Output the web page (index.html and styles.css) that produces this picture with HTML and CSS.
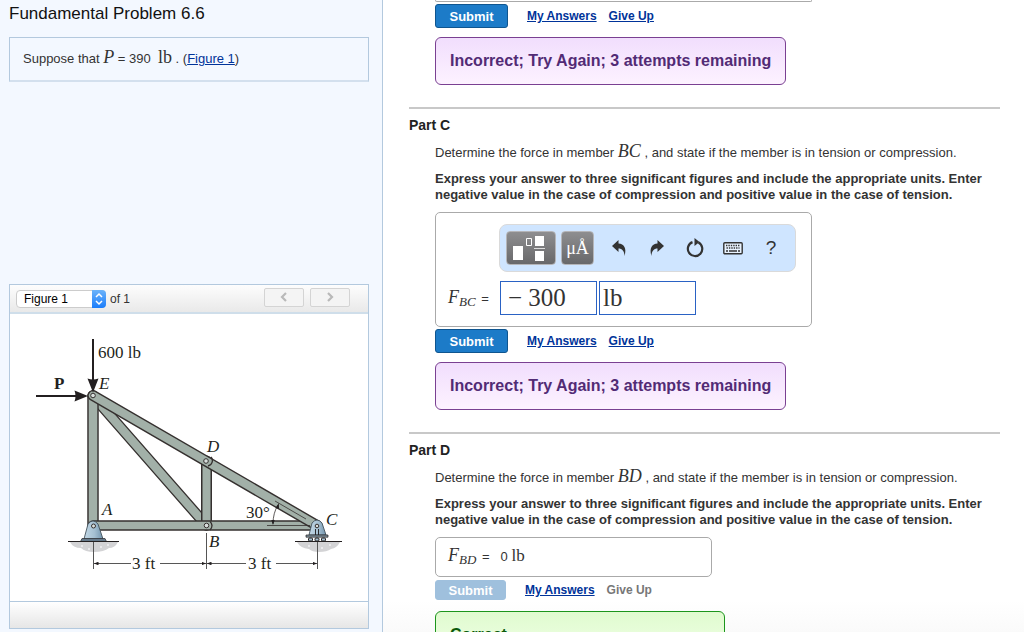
FILE: index.html
```html
<!DOCTYPE html>
<html lang="en">
<head>
<meta charset="utf-8">
<title>Fundamental Problem 6.6</title>
<link rel="stylesheet" href="styles.css">
</head>
<body>
<div class="layout">
  <aside class="sidebar">
    <h1 class="title">Fundamental Problem 6.6</h1>
    <div class="statement">Suppose that <i class="math">P</i> = 390 &nbsp;<span class="unit">lb</span> . (<a href="#figure">Figure 1</a>)</div>
    <section class="figure" id="figure">
      <div class="figure-bar">
        <label class="picker">
          <select class="picker-select" aria-label="Figure"><option>Figure 1</option></select>
          <svg class="picker-icon" width="14" height="18" viewBox="0 0 14 18" aria-hidden="true"><path d="M4 7l3-3 3 3M4 11l3 3 3-3" fill="none" stroke="#fff" stroke-width="1.5"/></svg>
        </label>
        <span class="figure-count">of 1</span>
        <div class="pager">
          <button class="pager-button" type="button" aria-label="Previous figure"><svg width="8" height="10" viewBox="0 0 8 10"><path d="M6 1L2 5l4 4" fill="none" stroke="#b9b9b9" stroke-width="2.2"/></svg></button>
          <button class="pager-button" type="button" aria-label="Next figure"><svg width="8" height="10" viewBox="0 0 8 10"><path d="M2 1l4 4-4 4" fill="none" stroke="#b9b9b9" stroke-width="2.2"/></svg></button>
        </div>
      </div>
      <svg class="truss" viewBox="10 314 358 287" role="img" aria-label="Truss loaded at joint E">
        <defs>
          <linearGradient id="steel" x1="0" x2="1"><stop offset="0" stop-color="#c3d8e6"/><stop offset=".55" stop-color="#a5c0d2"/><stop offset="1" stop-color="#7294ad"/></linearGradient>
          <marker id="dim" viewBox="0 0 5 4" refX="5" refY="2" markerWidth="5" markerHeight="4" orient="auto-start-reverse"><path d="M0 0L5 2 0 4z" fill="#231f20"/></marker>
        </defs>
        <g fill="#d3d3d5">
          <path d="M70 542h48q-3 6-9 6-5 4-15 4-9 0-13-4-8 0-11-6z"/>
          <path d="M297 542h43q-3 6-9 7-4 3-12 3-7 0-10-3-9-1-12-7z"/>
        </g>
        <g fill="#f1f1f2"><circle cx="82" cy="546" r="1"/><circle cx="89" cy="549" r="1"/><circle cx="101" cy="547" r="1"/><circle cx="108" cy="545" r="1"/><circle cx="309" cy="546" r="1"/><circle cx="322" cy="548" r="1"/><circle cx="330" cy="545" r="1"/></g>
        <g fill="none" stroke-linecap="round">
          <path d="M93 396L206 525" stroke="#35302f" stroke-width="11"/><path d="M93 396L206 525" stroke="#a2b0a8" stroke-width="8.4"/>
          <path d="M206.500 461V525" stroke="#35302f" stroke-width="11"/><path d="M206.500 461V525" stroke="#a2b0a8" stroke-width="8"/>
          <path d="M93 396V526" stroke="#35302f" stroke-width="11.500"/><path d="M93 396V526" stroke="#a2b0a8" stroke-width="8.600"/>
          <path d="M93 525.500H317" stroke="#35302f" stroke-width="10.600"/><path d="M93 525.500H317" stroke="#a2b0a8" stroke-width="7.600"/>
          <path d="M93 395.500L317 525.500" stroke="#35302f" stroke-width="11"/><path d="M93 395.500L317 525.500" stroke="#a2b0a8" stroke-width="8.200"/>
        </g>
        <g fill="none" stroke="#35302f">
          <path d="M211 457a5.500 5.500 0 0 1-3 9M210 521.500q4 4 0 8.500" stroke-width="1.3"/>
          <path d="M275 501l31 18M267 525.500h43" stroke-width=".8"/>
          <path d="M278 505Q273 513 273 524" stroke-width=".8"/>
        </g>
        <path d="M275.500 508l3.300-5 .2 5.800zM271.300 520h3.400l-1.700 5z" fill="#231f20"/>
        <path d="M84 539l4-15q5-6 10 0l5 15z" fill="url(#steel)" stroke="#44525c" stroke-width=".9"/>
        <path d="M82 538.500h23l1.500 3h-26z" fill="#65798a" stroke="#2b2b2e" stroke-width=".7"/>
        <path d="M309 535l3-12q5-6 10 0l4 12z" fill="url(#steel)" stroke="#44525c" stroke-width=".9"/>
        <path d="M315.500 529v6M318.500 529v6" stroke="#2b2b2e"/>
        <path d="M306 535h22v2.200h-22z" fill="#7d909c" stroke="#231f20" stroke-width=".7"/>
        <g fill="#a9c3d2" stroke="#231f20" stroke-width="1"><rect x="308.500" y="538" width="4" height="3" rx="1"/><rect x="315" y="538" width="4" height="3" rx="1"/><rect x="321.500" y="538" width="4" height="3" rx="1"/></g>
        <path d="M68 541.500h51M295 541.500h47" stroke="#231f20" stroke-width="1"/>
        <g fill="#d9dfdd" stroke="#35302f" stroke-width="1"><circle cx="93" cy="395.500" r="2.300"/><circle cx="206" cy="461" r="2.300"/><circle cx="206.500" cy="525.500" r="2.300"/><circle cx="93.500" cy="526" r="2"/><circle cx="317" cy="526" r="1.800"/></g>
        <path d="M93 339v42M36 396h42" stroke="#231f20" stroke-width="2"/>
        <path d="M87.500 378.500q5.500 2 11 0L93 392.500zM74.500 390.500q2 5.500 0 11L88 396z" fill="#231f20"/>
        <path d="M93.500 542v27M206.500 533v36M317.500 542v27" stroke="#555" stroke-width="1"/>
        <g stroke="#444" stroke-width=".9"><path d="M131 563.500H94" marker-end="url(#dim)"/><path d="M160 563.500H206" marker-end="url(#dim)"/><path d="M246 563.500H207" marker-end="url(#dim)"/><path d="M276 563.500H317" marker-end="url(#dim)"/></g>
        <g class="truss-text">
          <text x="98" y="358">600 lb</text>
          <text x="54" y="389" font-weight="bold">P</text>
          <text x="132" y="569">3 ft</text>
          <text x="248" y="569">3 ft</text>
          <text x="246" y="518">30°</text>
          <g font-style="italic"><text x="99" y="389">E</text><text x="207" y="452">D</text><text x="102" y="515">A</text><text x="209" y="547">B</text><text x="326" y="525">C</text></g>
        </g>
      </svg>
      <div class="figure-foot"></div>
    </section>
  </aside>

  <main class="content">
    <section class="part part-scrolled">
      <div class="part-body">
        <div class="answer answer-wide answer-end"></div>
        <div class="actions"><button class="submit" type="button">Submit</button><a href="#answers">My Answers</a><a href="#giveup">Give Up</a></div>
        <div class="feedback">Incorrect; Try Again; 3 attempts remaining</div>
      </div>
    </section>

    <section class="part">
      <h2 class="part-title">Part C</h2>
      <div class="part-body">
        <p class="question">Determine the force in member <i class="math">BC</i> , and state if the member is in tension or compression.</p>
        <p class="instructions">Express your answer to three significant figures and include the appropriate units. Enter negative value in the case of compression and positive value in the case of tension.</p>
        <div class="answer answer-wide answer-editor">
          <div class="tools">
            <button class="tool-key" type="button" aria-label="Templates"><svg width="36" height="26" viewBox="0 0 36 26"><path d="M0 11h10v14H0zM22 1h9v10h-9zM22 16h9v10h-9z" fill="#fff"/><path d="M13.500 3.500h5v7h-5z" fill="none" stroke="#fff"/><path d="M21 13.500h11" stroke="#ddd"/></svg></button>
            <button class="tool-key tool-symbols" type="button">μÅ</button>
            <button class="tool" type="button" aria-label="Undo"><svg width="16" height="16" viewBox="0 0 16 16"><path d="M1 6l6.500-6v3.500C13 4 16 8 13.500 16 13.500 11 11 8.500 7.500 8.500V12z" fill="#333"/></svg></button>
            <button class="tool" type="button" aria-label="Redo"><svg width="16" height="16" viewBox="0 0 16 16"><path d="M15 6L8.500 0v3.500C3 4 0 8 2.500 16 2.500 11 5 8.500 8.500 8.500V12z" fill="#333"/></svg></button>
            <button class="tool" type="button" aria-label="Reset"><svg width="18" height="20" viewBox="0 0 18 20"><path d="M12.500 4.500a7.200 7.200 0 1 1-6-.4" fill="none" stroke="#333" stroke-width="2.200"/><path d="M8.500 0l5 4-5 4z" fill="#333"/></svg></button>
            <button class="tool" type="button" aria-label="Keyboard"><svg width="20" height="14" viewBox="0 0 20 14"><rect x=".8" y="1.800" width="18.400" height="11" rx="1" fill="#e9f3ff" stroke="#333" stroke-width="1.400"/><path d="M3 4.500h14M3.500 7h13" stroke="#333" stroke-width="1.400" stroke-dasharray="1.400 1"/><path d="M3 10h2M6 10h8M15 10h2" stroke="#333" stroke-width="1.500"/></svg></button>
            <button class="tool tool-help" type="button" aria-label="Help">?</button>
          </div>
          <div class="entry">
            <label class="variable" for="value"><i>F<sub>BC</sub></i> =</label>
            <input class="field field-value" id="value" type="text" value="− 300">
            <input class="field" type="text" value="lb" aria-label="Units">
          </div>
        </div>
        <div class="actions"><button class="submit" type="button">Submit</button><a href="#answers">My Answers</a><a href="#giveup">Give Up</a></div>
        <div class="feedback">Incorrect; Try Again; 3 attempts remaining</div>
      </div>
    </section>

    <section class="part">
      <h2 class="part-title">Part D</h2>
      <div class="part-body">
        <p class="question">Determine the force in member <i class="math">BD</i> , and state if the member is in tension or compression.</p>
        <p class="instructions">Express your answer to three significant figures and include the appropriate units. Enter negative value in the case of compression and positive value in the case of tension.</p>
        <div class="answer answer-result"><span class="variable"><i>F<sub>BD</sub></i> =</span><span>0 <span class="result-unit">lb</span></span></div>
        <div class="actions actions-done"><button class="submit" type="button" disabled>Submit</button><a href="#answers">My Answers</a><span class="muted">Give Up</span></div>
        <div class="feedback feedback-correct">Correct</div>
      </div>
    </section>
  </main>
</div>
</body>
</html>
```
FILE: styles.css
```css
* { box-sizing: border-box; }

body {
  margin: 0;
  font: 13px/16px "Liberation Sans", Arial, sans-serif;
  color: #333;
  background: #fff;
}

h1, h2, p { margin: 0; }
a { color: #039; }
button { font-family: inherit; padding: 0; }

.layout {
  display: flex;
  height: 100vh;
  overflow: hidden;
}

/* Problem statement and figure */
.sidebar {
  flex: 0 0 383px;
  display: flex;
  flex-direction: column;
  padding: 4px 13px 3px 9px;
  background: #f3f8ff;
  border-right: 1px solid #b3c9de;
}
.title {
  font-size: 17px;
  line-height: 20px;
  font-weight: normal;
  color: #111;
}
.statement {
  margin-top: 13px;
  padding: 11px 13px;
  line-height: 20px;
  border: 1px solid #b3c9de;
  border-bottom: 2px solid #d3e0ee;
}
.math,
.unit {
  font-family: "Liberation Serif", serif;
  font-size: 18px;
  line-height: 16px;
}

.figure {
  margin-top: auto;
  background: #fff;
  border: 1px solid #b3c9de;
}
.figure-bar {
  display: flex;
  align-items: center;
  height: 29px;
  padding: 0 18px 0 6px;
  background: linear-gradient(#fdfdfd, #e9e9e9);
  border-bottom: 2px solid #cfdeea;
}
.picker { position: relative; display: flex; }
.picker-select {
  appearance: none;
  width: 90px;
  height: 18px;
  padding: 0 20px 0 7px;
  font: 12px/16px "Liberation Sans", Arial, sans-serif;
  color: #000;
  background: #fff;
  border: 1px solid #ccc;
  border-radius: 4px;
}
.picker-icon {
  position: absolute;
  right: 0;
  top: 0;
  background: linear-gradient(#6cb3fa, #1a7dfb);
  border-radius: 0 4px 4px 0;
}
.figure-count { margin-left: 4px; font-size: 12px; }
.pager { display: flex; gap: 6px; margin: 0 0 3px auto; }
.pager-button {
  display: flex;
  align-items: center;
  justify-content: center;
  width: 40px;
  height: 19px;
  background: #f4f4f4;
  border: 1px solid #d4d4d4;
  border-radius: 2px;
}
.truss { display: block; width: 100%; }
.truss-text { font: 17px "Liberation Serif", serif; fill: #231f20; }
.figure-foot {
  height: 27px;
  background: linear-gradient(#fff, #e6e6e6);
  border-top: 1px solid #b3c9de;
}

/* Parts */
.content {
  flex: 1;
  min-width: 0;
  padding: 0 24px 0 26px;
  background: linear-gradient(#fff 95%, #fafafa);
}
.part {
  padding: 8px 0 22px;
  border-top: 2px solid #c8c8c8;
}
.part-scrolled { padding-top: 0; border-top: 0; }
.part-title { font-size: 14px; line-height: 16px; color: #222; }
.part-body { padding-left: 26px; }
.question { margin-top: 10px; }
.instructions { margin-top: 10px; font-weight: bold; }

.answer {
  margin-top: 9px;
  border: 1px solid #aaa;
  border-radius: 5px;
}
.answer-wide { max-width: 377px; }
.answer-end {
  height: 2px;
  margin-top: 0;
  border-top: 0;
  border-radius: 0 0 5px 5px;
}
.answer-editor { padding: 11px 15px 11px 12px; }
.answer-result {
  display: flex;
  align-items: center;
  gap: 11px;
  max-width: 277px;
  height: 40px;
  padding: 0 12px 2px;
}
.result-unit { font: 17px/16px "Liberation Serif", serif; }

.tools {
  display: flex;
  align-items: center;
  height: 48px;
  margin-left: 51px;
  padding-left: 6px;
  background: #cfe5ff;
  border: 1px solid #dadada;
  border-radius: 8px;
}
.tool-key {
  width: 50px;
  height: 34px;
  margin-right: 5px;
  color: #fff;
  background: linear-gradient(#8e8e90, #68686a);
  border: 1px solid #b5b5b8;
  border-radius: 4px;
}
.tool-key svg { display: block; margin: 0 auto; }
.tool-symbols {
  width: 33px;
  margin-right: 6px;
  font: 18px/24px "Liberation Serif", serif;
}
.tool {
  display: flex;
  align-items: center;
  justify-content: center;
  width: 38px;
  height: 34px;
  color: #333;
  background: none;
  border: 0;
}
.tool-help { font-size: 19px; }

.entry { display: flex; align-items: center; margin-top: 9px; }
.variable { font-size: 13px; white-space: nowrap; }
.variable i { margin-right: 2px; font: italic 18px/18px "Liberation Serif", serif; }
.variable sub { font-size: 13px; line-height: 1; vertical-align: -3px; }
.entry .variable { flex: 0 0 52px; }
.field {
  width: 97px;
  height: 34px;
  margin-right: 2px;
  padding: 0 3px;
  font: 25px/30px "Liberation Serif", serif;
  color: #333;
  background: #fff;
  border: 1px solid #2a62c4;
  border-radius: 0;
}
.field-value { padding-left: 7px; }

.actions {
  display: flex;
  align-items: center;
  gap: 12px;
  margin-top: 2px;
  font-size: 12px;
  font-weight: bold;
}
.submit {
  width: 73px;
  height: 24px;
  margin-right: 7px;
  font-size: 13px;
  font-weight: bold;
  color: #fff;
  background: #1c7bc8;
  border: 1px solid #0f558f;
  border-radius: 3px;
}
.submit:disabled {
  width: 71px;
  height: 20px;
  background: #9fc0dd;
  border-color: #9fc0dd;
}
.actions-done { margin-top: 3px; }
.muted { color: #777; }

.feedback {
  width: fit-content;
  margin-top: 9px;
  padding: 14px;
  font-size: 16px;
  line-height: 18px;
  font-weight: bold;
  color: #522b75;
  background: linear-gradient(#f1defd, #fdf2ff);
  border: 1px solid #7a4092;
  border-radius: 6px;
}
.feedback-correct {
  width: auto;
  max-width: 290px;
  margin-top: 11px;
  color: #0b5a0b;
  background: linear-gradient(#e0fbcf, #f0ffe6);
  border-color: #1c951c;
}
```
